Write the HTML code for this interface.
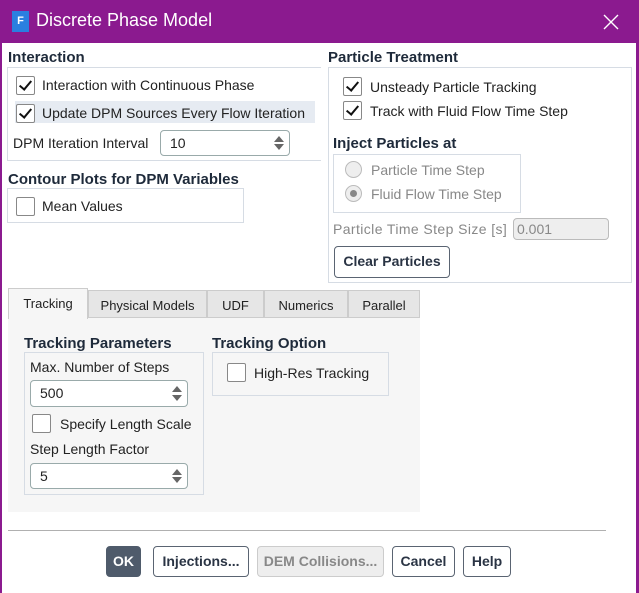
<!DOCTYPE html><html><head><style>
*{box-sizing:border-box;margin:0;padding:0}
body{width:639px;height:593px;overflow:hidden;background:#fff;font-family:"Liberation Sans",sans-serif;font-size:14px;color:#222;position:relative}
.a{position:absolute;white-space:nowrap}
.b{font-weight:bold;color:#1e2a3a}
.box{position:absolute;border:1px solid #d6dce4}
.cb{position:absolute;width:19px;height:19px;border:1px solid #888;background:#fff;border-radius:2px}
.cb.on::after{content:"";position:absolute;left:5px;top:1px;width:5px;height:10px;border:solid #111;border-width:0 2.5px 2.5px 0;transform:rotate(40deg)}
.inp{position:absolute;border:1px solid #9aa;border-radius:4px;background:#fff;padding-left:9px;line-height:24px}
.sp{position:absolute;right:5px;width:0;height:0;border-left:5px solid transparent;border-right:5px solid transparent}
.up{top:5px;border-bottom:6px solid #666}.dn{bottom:5px;border-top:6px solid #666}
.btn{position:absolute;border:1px solid #5a6472;border-radius:4px;background:#fff;font-weight:bold;color:#2a3444;text-align:center;line-height:29px}
.tab{position:absolute;top:290px;height:28px;border:1px solid #ccc;background:#e6e6e6;text-align:center;line-height:30px;font-size:13px}
.rd{position:absolute;width:17px;height:17px;border-radius:50%;border:1px solid #bbb;background:#eee}
</style></head><body>
<div class="a" style="left:0;top:0;width:639px;height:43px;background:#8b1a8f"></div>
<div class="a" style="left:0;top:0;width:2px;height:593px;background:#8b1a8f"></div>
<div class="a" style="left:636px;top:0;width:3px;height:593px;background:#8b1a8f"></div>
<div class="a" style="left:12px;top:11px;width:17px;height:21px;background:#2a7fe0;color:#fff;font-size:11px;font-weight:bold;text-align:center;line-height:21px">F</div>
<div class="a" style="left:36px;top:10px;color:#fff;font-size:18px">Discrete Phase Model</div>
<svg class="a" style="left:603px;top:14px" width="16" height="16"><path d="M1 1L15 15M15 1L1 15" stroke="#fff" stroke-width="1.4"/></svg>

<div class="a b" style="left:8px;top:49px;font-size:15px">Interaction</div>
<div class="box" style="left:7px;top:67px;width:314px;height:94px;border-right:none"></div>
<div class="cb on" style="left:16px;top:76px"></div><div class="a" style="left:42px;top:77px">Interaction with Continuous Phase</div>
<div class="a" style="left:15px;top:101px;width:300px;height:22px;background:#e6ebf2"></div>
<div class="cb on" style="left:16px;top:104px"></div><div class="a" style="left:42px;top:105px">Update DPM Sources Every Flow Iteration</div>
<div class="a" style="left:13px;top:135px">DPM Iteration Interval</div>
<div class="inp" style="left:160px;top:130px;width:130px;height:26px">10<div class="sp up"></div><div class="sp dn"></div></div>

<div class="a b" style="left:8px;top:171px;font-size:15px">Contour Plots for DPM Variables</div>
<div class="box" style="left:7px;top:188px;width:237px;height:35px"></div>
<div class="cb" style="left:16px;top:197px"></div><div class="a" style="left:42px;top:198px">Mean Values</div>

<div class="a b" style="left:328px;top:49px;font-size:15px">Particle Treatment</div>
<div class="box" style="left:328px;top:67px;width:304px;height:216px"></div>
<div class="cb on" style="left:343px;top:77px"></div><div class="a" style="left:370px;top:79px">Unsteady Particle Tracking</div>
<div class="cb on" style="left:343px;top:101px"></div><div class="a" style="left:370px;top:103px">Track with Fluid Flow Time Step</div>
<div class="a b" style="left:333px;top:135px;font-size:15px">Inject Particles at</div>
<div class="box" style="left:333px;top:154px;width:188px;height:59px"></div>
<div class="rd" style="left:345px;top:161px"></div><div class="a" style="left:371px;top:162px;color:#888">Particle Time Step</div>
<div class="rd" style="left:345px;top:185px"><div style="position:absolute;left:4px;top:4px;width:7px;height:7px;border-radius:50%;background:#888"></div></div><div class="a" style="left:371px;top:186px;color:#888">Fluid Flow Time Step</div>
<div class="a" style="left:333px;top:221px;color:#888;letter-spacing:0.4px">Particle Time Step Size [s]</div>
<div class="a" style="left:513px;top:218px;width:96px;height:22px;border:1px solid #bbb;border-radius:4px;background:#eee;color:#888;padding-left:3px;line-height:20px">0.001</div>
<div class="btn" style="left:334px;top:246px;width:116px;height:32px">Clear Particles</div>

<div class="a" style="left:8px;top:318px;width:412px;height:194px;background:#f6f6f6"></div>
<div class="tab" style="left:8px;top:288px;width:80px;height:31px;background:#f6f6f6;border-bottom:none">Tracking</div>
<div class="tab" style="left:88px;width:119px">Physical Models</div>
<div class="tab" style="left:207px;width:57px">UDF</div>
<div class="tab" style="left:264px;width:84px">Numerics</div>
<div class="tab" style="left:348px;width:72px">Parallel</div>

<div class="a b" style="left:24px;top:335px;font-size:15px">Tracking Parameters</div>
<div class="box" style="left:24px;top:352px;width:180px;height:143px"></div>
<div class="a" style="left:30px;top:359px">Max. Number of Steps</div>
<div class="inp" style="left:30px;top:380px;width:158px;height:27px">500<div class="sp up"></div><div class="sp dn"></div></div>
<div class="cb" style="left:32px;top:414px"></div><div class="a" style="left:60px;top:416px">Specify Length Scale</div>
<div class="a" style="left:30px;top:441px">Step Length Factor</div>
<div class="inp" style="left:30px;top:463px;width:158px;height:26px">5<div class="sp up"></div><div class="sp dn"></div></div>

<div class="a b" style="left:212px;top:335px;font-size:15px">Tracking Option</div>
<div class="box" style="left:212px;top:352px;width:177px;height:44px"></div>
<div class="cb" style="left:227px;top:363px"></div><div class="a" style="left:254px;top:365px">High-Res Tracking</div>

<div class="a" style="left:8px;top:530px;width:598px;height:1px;background:#b0b0b0"></div>
<div class="btn" style="left:106px;top:546px;width:35px;height:31px;background:#4f5b6b;color:#fff;border-color:#4f5b6b">OK</div>
<div class="btn" style="left:153px;top:546px;width:96px;height:31px">Injections...</div>
<div class="btn" style="left:257px;top:546px;width:127px;height:31px;background:#eee;border-color:#ccc;color:#888">DEM Collisions...</div>
<div class="btn" style="left:392px;top:546px;width:63px;height:31px">Cancel</div>
<div class="btn" style="left:463px;top:546px;width:48px;height:31px">Help</div>
</body></html>
